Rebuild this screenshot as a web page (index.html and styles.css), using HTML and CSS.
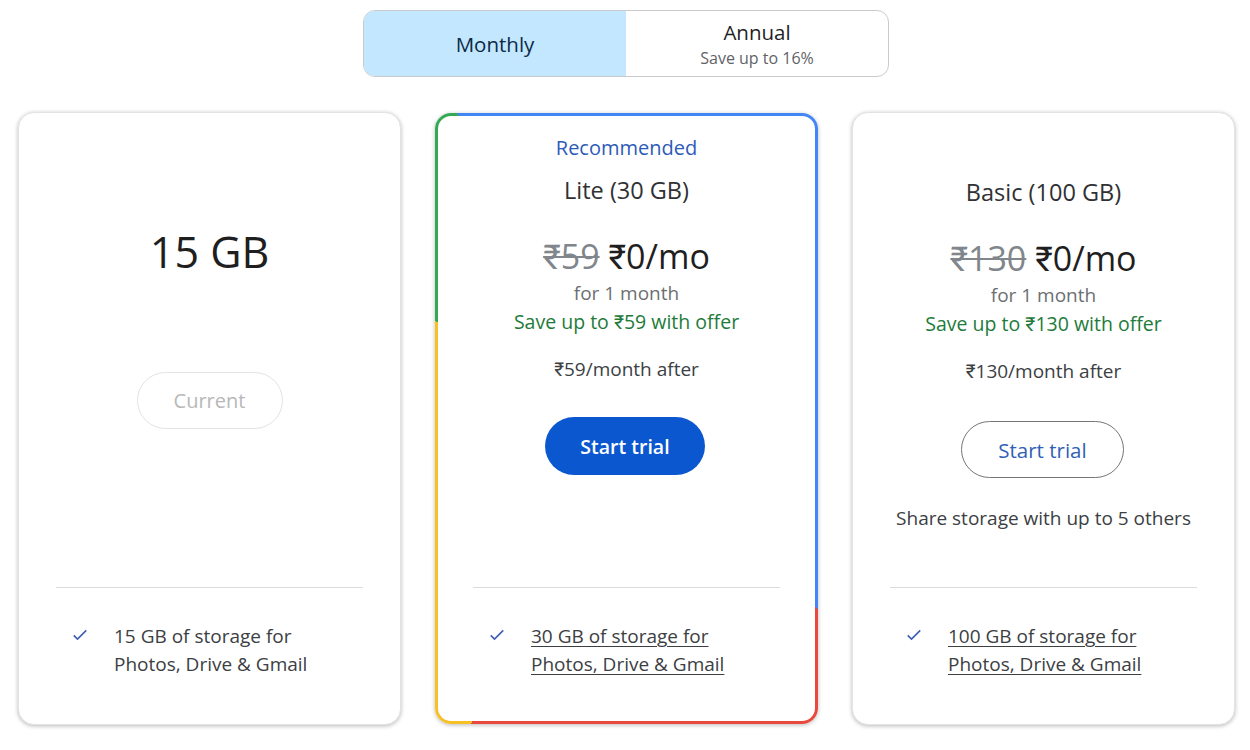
FILE: index.html
```html
<!DOCTYPE html>
<html lang="en">
<head>
<meta charset="utf-8">
<title>Plans</title>
<link rel="stylesheet" href="styles.css">
</head>
<body>
<div class="page">
  <div class="toggle-wrap">
    <div class="toggle">
      <div class="opt opt-active"><span class="opt-main">Monthly</span></div>
      <div class="opt"><span class="opt-main">Annual</span><span class="opt-sub">Save up to 16%</span></div>
    </div>
  </div>

  <div class="cards">
    <div class="card card-free">
      <div class="top">
        <div class="big">15 GB</div>
        <div class="btn btn-current">Current</div>
      </div>
      <div class="bottom">
        <div class="divider"></div>
        <div class="feature">
          <svg class="check" viewBox="0 0 24 24" width="20" height="20"><path d="M4.5 12.5l4.5 4.5L19.5 6.5" fill="none" stroke="#3f5fb3" stroke-width="2"/></svg>
          <span class="ftext">15 GB of storage for<br>Photos, Drive &amp; Gmail</span>
        </div>
      </div>
    </div>

    <div class="card card-rec">
      <div class="top">
        <div class="rec">Recommended</div>
        <div class="title">Lite (30 GB)</div>
        <div class="price"><span class="old">₹59</span> ₹0/mo</div>
        <div class="for">for 1 month</div>
        <div class="save">Save up to ₹59 with offer</div>
        <div class="after">₹59/month after</div>
        <div class="btn btn-fill">Start trial</div>
      </div>
      <div class="bottom">
        <div class="divider"></div>
        <div class="feature">
          <svg class="check" viewBox="0 0 24 24" width="20" height="20"><path d="M4.5 12.5l4.5 4.5L19.5 6.5" fill="none" stroke="#3f5fb3" stroke-width="2"/></svg>
          <span class="ftext link">30 GB of storage for<br>Photos, Drive &amp; Gmail</span>
        </div>
      </div>
    </div>

    <div class="card card-basic">
      <div class="top">
        <div class="title title-plain">Basic (100 GB)</div>
        <div class="price"><span class="old">₹130</span> ₹0/mo</div>
        <div class="for">for 1 month</div>
        <div class="save">Save up to ₹130 with offer</div>
        <div class="after">₹130/month after</div>
        <div class="btn btn-outline">Start trial</div>
        <div class="share">Share storage with up to 5 others</div>
      </div>
      <div class="bottom">
        <div class="divider"></div>
        <div class="feature">
          <svg class="check" viewBox="0 0 24 24" width="20" height="20"><path d="M4.5 12.5l4.5 4.5L19.5 6.5" fill="none" stroke="#3f5fb3" stroke-width="2"/></svg>
          <span class="ftext link">100 GB of storage for<br>Photos, Drive &amp; Gmail</span>
        </div>
      </div>
    </div>
  </div>
</div>
</body>
</html>
```

FILE: styles.css
```css
* { box-sizing: border-box; }
html, body { margin: 0; padding: 0; background: #fff; }
body {
  font-family: "Open Sans", Roboto, "Noto Sans", "DejaVu Sans", sans-serif;
  color: #3c4043;
  width: 1250px;
  height: 750px;
  overflow: hidden;
}
.page { padding-top: 10px; }

.toggle-wrap { display: flex; justify-content: center; padding-left: 2px; }
.toggle {
  display: flex;
  width: 526px;
  height: 67px;
  border: 1px solid #c8cacc;
  border-radius: 12px;
  overflow: hidden;
}
.opt {
  flex: 1;
  display: flex;
  flex-direction: column;
  align-items: center;
  justify-content: center;
}
.opt-active { background: #c2e7ff; }
.opt-main { font-size: 20.5px; line-height: 24px; color: #1f1f1f; }
.opt-active .opt-main { color: #0b2a45; }
.opt-sub { font-size: 16px; line-height: 20px; color: #5f6368; margin-top: 4px; }

.cards {
  display: grid;
  grid-template-columns: repeat(3, 383px);
  column-gap: 34px;
  padding: 0 16px 0 18px;
  margin-top: 35px;
  height: 613px;
}
.card {
  display: flex;
  flex-direction: column;
  border: 1px solid #e3e3e3;
  border-radius: 16px;
  background: #fff;
  box-shadow: 0 1px 4px rgba(0,0,0,0.28);
  padding: 20px 37px 46px 37px;
  text-align: center;
}
.card-rec {
  margin: 1px 0 1px 0;
  border: 3px solid transparent;
  background:
    linear-gradient(#fff, #fff) padding-box,
    conic-gradient(#4285f4 0deg 135deg, #e9493c 135deg 207deg, #f6c026 207deg 297deg, #34a853 297deg 331deg, #4285f4 331deg 360deg) border-box;
  padding: 20px 35px 43px 35px;
}
.top { display: flex; flex-direction: column; align-items: center; }
.bottom { margin-top: auto; }

.big { font-size: 43px; line-height: 48px; color: #1f1f1f; margin-top: 95px; }
.rec { font-size: 20px; line-height: 24px; color: #2d5bb8; }
.title { font-size: 23.5px; line-height: 28px; color: #303134; margin-top: 16px; }
.title-plain { margin-top: 45px; }
.price { font-size: 34px; line-height: 40px; color: #1f1f1f; margin-top: 32px; }
.old { color: #80868b; text-decoration: line-through; text-decoration-thickness: 2px; }
.for { font-size: 19px; line-height: 28px; color: #6b6f73; margin-top: 3px; }
.save { font-size: 19.5px; line-height: 28px; color: #1e7b3a; margin-top: 1px; }
.after { font-size: 19px; line-height: 28px; color: #3c4043; margin-top: 19px; }
.share { font-size: 19px; line-height: 28px; color: #3c4043; margin-top: 26px; }

.btn {
  display: flex;
  align-items: center;
  justify-content: center;
  border-radius: 30px;
  font-size: 19.5px;
}
.btn-current {
  width: 146px; height: 57px;
  margin-top: 96px;
  border: 1px solid #e3e3e3;
  color: #b8b8b8;
  font-size: 20px;
}
.btn-fill {
  width: 160px; height: 58px;
  margin-top: 34px;
  margin-right: 3px;
  background: #0b57d0;
  color: #fff;
  font-weight: 600;
}
.btn-outline {
  width: 163px; height: 57px;
  margin-top: 36px;
  margin-right: 2px;
  border: 1px solid #747775;
  color: #2f5fb6;
  font-size: 20.5px;
}

.divider { height: 1px; background: #dadce0; }
.feature {
  display: flex;
  align-items: flex-start;
  gap: 24px;
  padding-left: 14px;
  margin-top: 34px;
  text-align: left;
}
.check { flex: none; margin-top: 3px; }
.ftext { font-size: 19px; line-height: 28px; color: #3c4043; }
.link { text-decoration: underline; text-underline-offset: 3px; text-decoration-thickness: 1px; }
```
